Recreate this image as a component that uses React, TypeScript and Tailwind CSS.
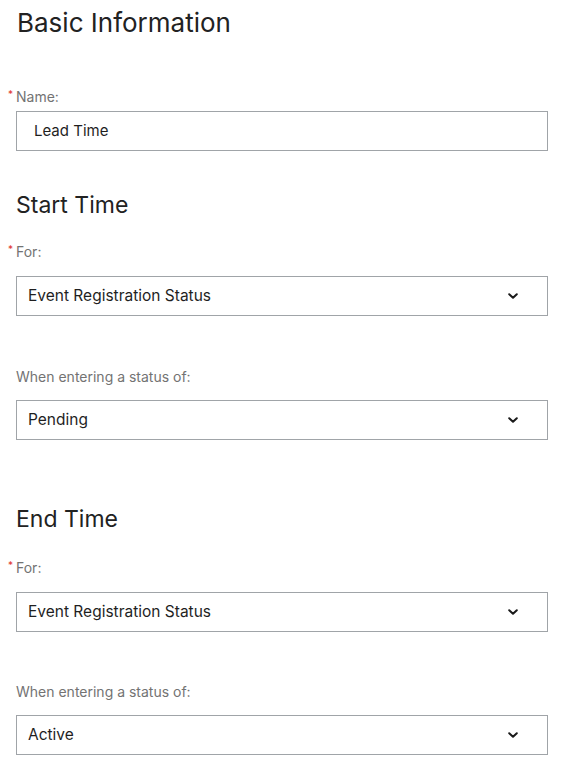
import React from "react";

function Label({ text, required }: { text: string; required?: boolean }) {
  return (
    <div className="relative h-[20px] flex items-center text-[14px] leading-[20px] text-[#737373]">
      {required && (
        <span className="absolute left-[-8px] top-[1px] text-[10px] leading-[12px] text-[#e0332c]">*</span>
      )}
      <span>{text}</span>
    </div>
  );
}

function Chevron() {
  return (
    <svg width="10" height="6" viewBox="0 0 10 6" className="mr-[29px]">
      <path d="M1.2 1.2 L5 4.8 L8.8 1.2" fill="none" stroke="#1a1a1a" strokeWidth="2" strokeLinecap="round" strokeLinejoin="round" />
    </svg>
  );
}

function Select({ value, className }: { value: string; className?: string }) {
  return (
    <div
      className={
        "h-[40px] border border-[#a0a4a8] bg-white flex items-center justify-between pl-[11px] text-[15.5px] text-[#1f1f1f] " +
        (className ?? "")
      }
    >
      <span>{value}</span>
      <Chevron />
    </div>
  );
}

export default function App() {
  return (
    <div
      className="bg-white w-[565px] h-[767px] pl-[16px] pr-[17px] pt-[7px] overflow-hidden"
      style={{ fontFamily: "Inter, Roboto, 'Noto Sans', sans-serif" }}
    >
      <h1 className="text-[26px] leading-[32px] text-[#222] font-normal pl-[1px]">Basic Information</h1>

      <div className="mt-[48px]">
        <Label text="Name:" required />
      </div>
      <div className="mt-[4px] h-[40px] border border-[#a0a4a8] bg-white flex items-center pl-[17px] text-[15px] text-[#1f1f1f]">
        Lead Time
      </div>

      <h2 className="mt-[39px] text-[23px] leading-[30px] text-[#222] font-normal">Start Time</h2>
      <div className="mt-[22px]">
        <Label text="For:" required />
      </div>
      <Select value="Event Registration Status" className="mt-[14px]" />

      <div className="mt-[51px]">
        <Label text="When entering a status of:" />
      </div>
      <Select value="Pending" className="mt-[13px]" />

      <h2 className="mt-[64px] text-[23px] leading-[30px] text-[#222] font-normal">End Time</h2>
      <div className="mt-[24px]">
        <Label text="For:" required />
      </div>
      <Select value="Event Registration Status" className="mt-[14px]" />

      <div className="mt-[50px]">
        <Label text="When entering a status of:" />
      </div>
      <Select value="Active" className="mt-[13px]" />
    </div>
  );
}
